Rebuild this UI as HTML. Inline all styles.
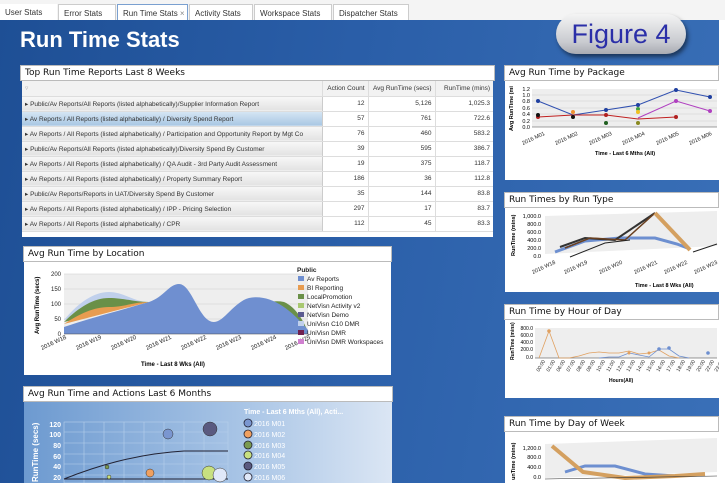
<!DOCTYPE html><html><head><style>
*{margin:0;padding:0;box-sizing:border-box}
body{width:725px;height:483px;overflow:hidden;background:#fff;font-family:"Liberation Sans",sans-serif;position:relative}
.tabs{position:absolute;top:0;left:0;height:20px;width:725px;background:#f4f4f4}
.tab{position:absolute;top:4px;height:16px;border:1px solid #ccc;border-bottom:none;background:#fff;font-size:8px;color:#333;padding:4px 0 0 5px}
.bg{position:absolute;top:20px;left:0;width:719px;height:463px;background:linear-gradient(100deg,#1e4f95 0%,#2a5ea8 45%,#3a70b8 100%)}
h1{position:absolute;left:20px;top:27px;color:#fff;font-size:22px;font-weight:bold}
.pill{position:absolute;left:556px;top:14px;width:130px;height:40px;border-radius:20px;background:linear-gradient(#f4f4f4,#c9cbd0 70%,#a9abb2);box-shadow:2px 3px 4px rgba(0,0,0,.5);color:#2b2fa8;font-size:27px;text-align:center;line-height:40px}
.pt{position:absolute;background:#fff;border:1px solid #bbb;color:#111;padding:2px 4px;height:16px;font-family:"DejaVu Sans",sans-serif;font-size:9px}
.pc{position:absolute;background:#fff}
table{border-collapse:collapse;font-size:6.5px;color:#333;font-family:"Liberation Sans",sans-serif;table-layout:fixed}
td{height:15px;border-bottom:1px solid #ddd;padding:0 3px;white-space:nowrap;overflow:hidden}
td.n{text-align:right;border-left:1px solid #ddd}
td.l{background:linear-gradient(#f8f8f8,#e2e2e2);border-right:1px solid #ccc}
tr.s td.l{background:linear-gradient(#d6e6f4,#a9c7e3)}
svg text{font-family:"Liberation Sans",sans-serif}
</style></head><body>
<div class="tabs">
<div class="tab" style="left:0;width:57px;border:none">User Stats</div>
<div class="tab" style="left:58px;width:58px">Error Stats</div>
<div class="tab" style="left:117px;width:71px;border-color:#7aa0d0">Run Time Stats <span style="color:#888">×</span></div>
<div class="tab" style="left:189px;width:64px">Activity Stats</div>
<div class="tab" style="left:254px;width:78px">Workspace Stats</div>
<div class="tab" style="left:333px;width:76px">Dispatcher Stats</div>
</div>
<div class="bg"></div>
<h1>Run Time Stats</h1>
<div class="pill">Figure 4</div>

<div class="pt" style="left:20px;top:65px;width:475px">Top Run Time Reports Last 8 Weeks</div>
<div class="pc" style="left:22px;top:81px;width:471px;height:156px">
<table style="width:471px">
<colgroup><col style="width:300px"><col style="width:46px"><col style="width:67px"><col style="width:58px"></colgroup>
<tr style="background:#f2f2f2"><td style="color:#aaa">▿</td><td class="n">Action Count</td><td class="n">Avg RunTime (secs)</td><td class="n">RunTime (mins)</td></tr>
<tr><td class="l">▸ Public/Av Reports/All Reports (listed alphabetically)/Supplier Information Report</td><td class="n">12</td><td class="n">5,126</td><td class="n">1,025.3</td></tr>
<tr class="s"><td class="l">▸ Av Reports / All Reports (listed alphabetically) / Diversity Spend Report</td><td class="n">57</td><td class="n">761</td><td class="n">722.6</td></tr>
<tr><td class="l">▸ Av Reports / All Reports (listed alphabetically) / Participation and Opportunity Report by Mgt Co</td><td class="n">76</td><td class="n">460</td><td class="n">583.2</td></tr>
<tr><td class="l">▸ Public/Av Reports/All Reports (listed alphabetically)/Diversity Spend By Customer</td><td class="n">39</td><td class="n">595</td><td class="n">386.7</td></tr>
<tr><td class="l">▸ Av Reports / All Reports (listed alphabetically) / QA Audit - 3rd Party Audit Assessment</td><td class="n">19</td><td class="n">375</td><td class="n">118.7</td></tr>
<tr><td class="l">▸ Av Reports / All Reports (listed alphabetically) / Property Summary Report</td><td class="n">186</td><td class="n">36</td><td class="n">112.8</td></tr>
<tr><td class="l">▸ Public/Av Reports/Reports in UAT/Diversity Spend By Customer</td><td class="n">35</td><td class="n">144</td><td class="n">83.8</td></tr>
<tr><td class="l">▸ Av Reports / All Reports (listed alphabetically) / IPP - Pricing Selection</td><td class="n">297</td><td class="n">17</td><td class="n">83.7</td></tr>
<tr><td class="l">▸ Av Reports / All Reports (listed alphabetically) / CPR</td><td class="n">112</td><td class="n">45</td><td class="n">83.3</td></tr>
</table></div>

<div class="pt" style="left:23px;top:246px;width:369px">Avg Run Time by Location</div>
<div class="pc" style="left:24px;top:262px;width:367px;height:113px">
<svg width="367" height="113" font-size="6">
<rect x="40" y="12" width="244" height="60" fill="#eee"/>
<g stroke="#ccc" stroke-width=".5"><line x1="40" y1="12" x2="284" y2="12"/><line x1="40" y1="27" x2="284" y2="27"/><line x1="40" y1="42" x2="284" y2="42"/><line x1="40" y1="57" x2="284" y2="57"/></g>
<path d="M40 58 C55 40,70 30,85 30 C100 30,110 40,125 40 Z" fill="#c0d0ec"/>
<path d="M40 60 C55 45,70 36,85 36 C100 36,110 40,125 40 Z" fill="#6a9048"/>
<path d="M40 62 C55 52,70 45,85 45 C100 45,110 40,125 40 Z" fill="#e89c50"/>
<path d="M230 48 C240 40,250 38,260 40 C272 45,280 60,284 70 L284 72 L230 72 Z" fill="#6a9048"/>
<path d="M40 72 L40 65 C60 58,90 50,125 40 C140 35,145 22,155 22 C168 22,175 60,190 60 C200 60,210 40,225 36 C245 32,265 45,284 68 L284 72 Z" fill="#6f8fd0"/>
<line x1="40" y1="72" x2="284" y2="72" stroke="#444" stroke-width=".6"/>
<g text-anchor="end" fill="#222"><text x="37" y="14">200</text><text x="37" y="29">150</text><text x="37" y="44">100</text><text x="37" y="59">50</text><text x="37" y="74">0</text></g>
<text transform="translate(15,72) rotate(-90)" font-weight="bold">Avg RunTime (secs)</text>
<g fill="#222"><text transform="translate(18,88) rotate(-25)">2016 W18</text><text transform="translate(53,88) rotate(-25)">2016 W19</text><text transform="translate(88,88) rotate(-25)">2016 W20</text><text transform="translate(123,88) rotate(-25)">2016 W21</text><text transform="translate(158,88) rotate(-25)">2016 W22</text><text transform="translate(193,88) rotate(-25)">2016 W23</text><text transform="translate(228,88) rotate(-25)">2016 W24</text><text transform="translate(262,88) rotate(-25)">2016 W25</text></g>
<text x="117" y="104" font-weight="bold">Time - Last 8 Wks (All)</text>
<g font-size="6.5" fill="#222"><text x="273" y="10" font-weight="bold">Public</text>
<rect x="274" y="14" width="6" height="5" fill="#6f8fd0"/><text x="283" y="19">Av Reports</text>
<rect x="274" y="23" width="6" height="5" fill="#e89c50"/><text x="283" y="28">BI Reporting</text>
<rect x="274" y="32" width="6" height="5" fill="#6a9048"/><text x="283" y="37">LocalPromotion</text>
<rect x="274" y="41" width="6" height="5" fill="#a8c870"/><text x="283" y="46">NetVisn Activity v2</text>
<rect x="274" y="50" width="6" height="5" fill="#5a5a90"/><text x="283" y="55">NetVisn Demo</text>
<rect x="274" y="59" width="6" height="5" fill="#c0d0ec"/><text x="283" y="64">UniVisn C10 DMR</text>
<rect x="274" y="68" width="6" height="5" fill="#702050"/><text x="283" y="73">UniVisn DMR</text>
<rect x="274" y="77" width="6" height="5" fill="#d080d0"/><text x="283" y="82">UniVisn DMR Workspaces</text></g>
</svg></div>

<div class="pt" style="left:23px;top:386px;width:370px">Avg Run Time and Actions Last 6 Months</div>
<div class="pc" style="left:24px;top:402px;width:368px;height:81px;background:linear-gradient(90deg,#6d9ad0,#a9c5e6 60%,#dbe6f4)">
<svg width="368" height="81" font-size="7">
<g stroke="#b8d0ec" stroke-width=".6" fill="none"><rect x="40" y="20" width="164" height="61"/>
<line x1="40" y1="30" x2="204" y2="30"/><line x1="40" y1="41" x2="204" y2="41"/><line x1="40" y1="52" x2="204" y2="52"/><line x1="40" y1="62" x2="204" y2="62"/><line x1="40" y1="73" x2="204" y2="73"/>
<line x1="60" y1="20" x2="60" y2="81"/><line x1="80" y1="20" x2="80" y2="81"/><line x1="100" y1="20" x2="100" y2="81"/><line x1="120" y1="20" x2="120" y2="81"/><line x1="140" y1="20" x2="140" y2="81"/><line x1="160" y1="20" x2="160" y2="81"/><line x1="180" y1="20" x2="180" y2="81"/></g>
<g fill="#fff" font-weight="bold" text-anchor="end" font-family="DejaVu Sans"><text x="37" y="25">120</text><text x="37" y="35">100</text><text x="37" y="46">80</text><text x="37" y="57">60</text><text x="37" y="67">40</text><text x="37" y="78">20</text></g>
<text transform="translate(14,80) rotate(-90)" fill="#fff" font-weight="bold" font-size="8">RunTime (secs)</text>
<path d="M40 77 C70 65,110 52,160 49 L204 49" stroke="#223" fill="none"/><line x1="40" y1="77" x2="204" y2="77" stroke="#223"/>
<g stroke="#333" stroke-width=".5"><circle cx="144" cy="32" r="5" fill="#7a96d0"/><circle cx="186" cy="27" r="7" fill="#5a5a80"/><circle cx="126" cy="71" r="4" fill="#f0a060"/><circle cx="185" cy="71" r="7" fill="#c8e080"/><circle cx="196" cy="73" r="7" fill="#e0e8f8"/><circle cx="83" cy="65" r="2" fill="#7a9a50"/><circle cx="85" cy="75" r="2" fill="#c8e080"/></g>
<g fill="#fff" font-family="DejaVu Sans" font-size="7"><text x="220" y="12" font-weight="bold">Time - Last 6 Mths (All), Acti...</text>
<g stroke="#223" stroke-width=".8"><circle cx="224" cy="21" r="4" fill="#7a96d0"/><circle cx="224" cy="32" r="4" fill="#f0a060"/><circle cx="224" cy="43" r="4" fill="#7a9a50"/><circle cx="224" cy="53" r="4" fill="#c8e080"/><circle cx="224" cy="64" r="4" fill="#5a5a80"/><circle cx="224" cy="75" r="4" fill="#e0e8f8"/></g>
<text x="230" y="24">2016 M01</text><text x="230" y="35">2016 M02</text><text x="230" y="46">2016 M03</text><text x="230" y="56">2016 M04</text><text x="230" y="67">2016 M05</text><text x="230" y="78">2016 M06</text></g>
</svg></div>

<div class="pt" style="left:504px;top:65px;width:215px">Avg Run Time by Package</div>
<div class="pc" style="left:505px;top:81px;width:214px;height:99px">
<svg width="214" height="99" font-size="5.5">
<rect x="27" y="8" width="185" height="38" fill="#eee"/>
<g stroke="#ccc" stroke-width=".5"><line x1="27" y1="14" x2="212" y2="14"/><line x1="27" y1="20" x2="212" y2="20"/><line x1="27" y1="27" x2="212" y2="27"/><line x1="27" y1="33" x2="212" y2="33"/><line x1="27" y1="40" x2="212" y2="40"/></g>
<line x1="27" y1="46" x2="212" y2="46" stroke="#444" stroke-width=".5"/>
<g text-anchor="end"><text x="25" y="10">1.2</text><text x="25" y="16">1.0</text><text x="25" y="22">0.8</text><text x="25" y="29">0.6</text><text x="25" y="35">0.4</text><text x="25" y="42">0.2</text><text x="25" y="48">0.0</text></g>
<text transform="translate(8,50) rotate(-90)" font-weight="bold">Avg RunTime (mi</text>
<polyline points="33,20 68,34 101,29 133,24 171,9 205,16" fill="none" stroke="#3050b0" stroke-width="1"/>
<polyline points="33,36 68,34 101,34 133,38 171,36" fill="none" stroke="#c02020" stroke-width="1"/>
<polyline points="133,37 171,20 205,30" fill="none" stroke="#b040c0" stroke-width="1"/>
<g fill="#2040a0"><circle cx="33" cy="20" r="2"/><circle cx="101" cy="29" r="2"/><circle cx="133" cy="24" r="2"/><circle cx="171" cy="9" r="2"/><circle cx="205" cy="16" r="2"/></g>
<g fill="#b02020"><circle cx="33" cy="36" r="2"/><circle cx="101" cy="34" r="2"/><circle cx="171" cy="36" r="2"/></g>
<circle cx="33" cy="34" r="2" fill="#111"/><circle cx="68" cy="36" r="2" fill="#111"/><circle cx="101" cy="42" r="2" fill="#206020"/><circle cx="133" cy="28" r="2" fill="#40a040"/><circle cx="133" cy="31" r="2" fill="#f0c020"/><circle cx="133" cy="42" r="2" fill="#8a8a20"/><circle cx="171" cy="20" r="2" fill="#b040c0"/><circle cx="205" cy="30" r="2" fill="#b040c0"/><circle cx="68" cy="31" r="2" fill="#f09030"/>
<g fill="#222"><text transform="translate(18,64) rotate(-25)">2016 M01</text><text transform="translate(51,64) rotate(-25)">2016 M02</text><text transform="translate(85,64) rotate(-25)">2016 M03</text><text transform="translate(118,64) rotate(-25)">2016 M04</text><text transform="translate(152,64) rotate(-25)">2016 M05</text><text transform="translate(185,64) rotate(-25)">2016 M06</text></g>
<text x="90" y="74" font-weight="bold">Time - Last 6 Mths (All)</text>
</svg></div>

<div class="pt" style="left:504px;top:192px;width:215px">Run Times by Run Type</div>
<div class="pc" style="left:505px;top:208px;width:214px;height:84px">
<svg width="214" height="84" font-size="5.5">
<path d="M40 8 L212 3 L212 38 L40 46 Z" fill="#eee"/>
<g text-anchor="end"><text x="36" y="10">1,000.0</text><text x="36" y="18">800.0</text><text x="36" y="26">600.0</text><text x="36" y="34">400.0</text><text x="36" y="42">200.0</text><text x="36" y="50">0.0</text></g>
<text transform="translate(10,48) rotate(-90)" font-weight="bold">RunTime (mins)</text>
<polyline points="50,44 80,33 115,30 150,30 172,36 185,41" fill="none" stroke="#6d8fd0" stroke-width="3"/>
<polyline points="55,39 80,30 110,32 150,5" fill="none" stroke="#333" stroke-width="2"/>
<polyline points="60,40 85,30 120,32 150,5" fill="none" stroke="#6a4020" stroke-width="1.5"/>
<polyline points="150,5 185,42" fill="none" stroke="#d4a060" stroke-width="4"/>
<polyline points="65,49 100,35 125,32" fill="none" stroke="#222" stroke-width="1"/>
<polyline points="188,44 212,36" fill="none" stroke="#222" stroke-width="1"/>
<g fill="#222"><text transform="translate(28,66) rotate(-25)">2016 W18</text><text transform="translate(60,66) rotate(-25)">2016 W19</text><text transform="translate(95,66) rotate(-25)">2016 W20</text><text transform="translate(130,66) rotate(-25)">2016 W21</text><text transform="translate(160,66) rotate(-25)">2016 W22</text><text transform="translate(190,66) rotate(-25)">2016 W23</text></g>
<text x="130" y="79" font-weight="bold">Time - Last 8 Wks (All)</text>
</svg></div>

<div class="pt" style="left:504px;top:304px;width:215px">Run Time by Hour of Day</div>
<div class="pc" style="left:505px;top:320px;width:214px;height:78px">
<svg width="214" height="78" font-size="5">
<rect x="30" y="8" width="182" height="30" fill="#eee"/>
<line x1="30" y1="38" x2="212" y2="38" stroke="#333" stroke-width=".6"/>
<g text-anchor="end"><text x="28" y="10">800.0</text><text x="28" y="17">600.0</text><text x="28" y="24">400.0</text><text x="28" y="31">200.0</text><text x="28" y="39">0.0</text></g>
<text transform="translate(9,40) rotate(-90)" font-weight="bold">RunTime (mins)</text>
<polyline points="34,38 44,11 54,38 64,38 74,36 84,33 94,32 104,33 114,33 124,31 134,34 144,33 154,30 164,36 174,38" fill="none" stroke="#e0a060" stroke-width=".8"/>
<polyline points="94,38 104,37 114,37 124,33 134,35 144,37 154,29 164,29 174,36 184,38" fill="none" stroke="#6d8fd0" stroke-width=".8"/>
<circle cx="44" cy="11" r="1.8" fill="#e0a060"/><circle cx="154" cy="29" r="1.8" fill="#6d8fd0"/><circle cx="164" cy="28" r="1.8" fill="#6d8fd0"/><circle cx="203" cy="33" r="1.8" fill="#6d8fd0"/><circle cx="124" cy="33" r="1.5" fill="#e0a060"/><circle cx="144" cy="33" r="1.5" fill="#e0a060"/>
<g fill="#222"><text transform="translate(34,52) rotate(-60)">00:00</text><text transform="translate(44,52) rotate(-60)">01:00</text><text transform="translate(54,52) rotate(-60)">06:00</text><text transform="translate(64,52) rotate(-60)">07:00</text><text transform="translate(74,52) rotate(-60)">08:00</text><text transform="translate(84,52) rotate(-60)">09:00</text><text transform="translate(94,52) rotate(-60)">10:00</text><text transform="translate(104,52) rotate(-60)">11:00</text><text transform="translate(114,52) rotate(-60)">12:00</text><text transform="translate(124,52) rotate(-60)">13:00</text><text transform="translate(134,52) rotate(-60)">14:00</text><text transform="translate(144,52) rotate(-60)">15:00</text><text transform="translate(154,52) rotate(-60)">16:00</text><text transform="translate(164,52) rotate(-60)">17:00</text><text transform="translate(174,52) rotate(-60)">18:00</text><text transform="translate(184,52) rotate(-60)">19:00</text><text transform="translate(194,52) rotate(-60)">20:00</text><text transform="translate(203,52) rotate(-60)">22:00</text><text transform="translate(212,52) rotate(-60)">23:00</text></g>
<text x="104" y="62" font-weight="bold">Hours(All)</text>
</svg></div>

<div class="pt" style="left:504px;top:416px;width:215px">Run Time by Day of Week</div>
<div class="pc" style="left:505px;top:432px;width:214px;height:51px">
<svg width="214" height="51" font-size="5.5">
<path d="M40 12 L212 6 L212 40 L40 46 Z" fill="#eee"/>
<g text-anchor="end"><text x="36" y="18">1,200.0</text><text x="36" y="27">800.0</text><text x="36" y="37">400.0</text><text x="36" y="47">0.0</text></g>
<text transform="translate(10,48) rotate(-90)" font-weight="bold">unTime (mins)</text>
<polyline points="60,40 80,34 110,34 140,42 170,44" fill="none" stroke="#6d8fd0" stroke-width="3"/>
<polyline points="47,14 78,40 120,46 170,44 200,42" fill="none" stroke="#d4a060" stroke-width="4"/>
<line x1="40" y1="47" x2="212" y2="44" stroke="#333" stroke-width=".6"/>
</svg></div>
</body></html>
